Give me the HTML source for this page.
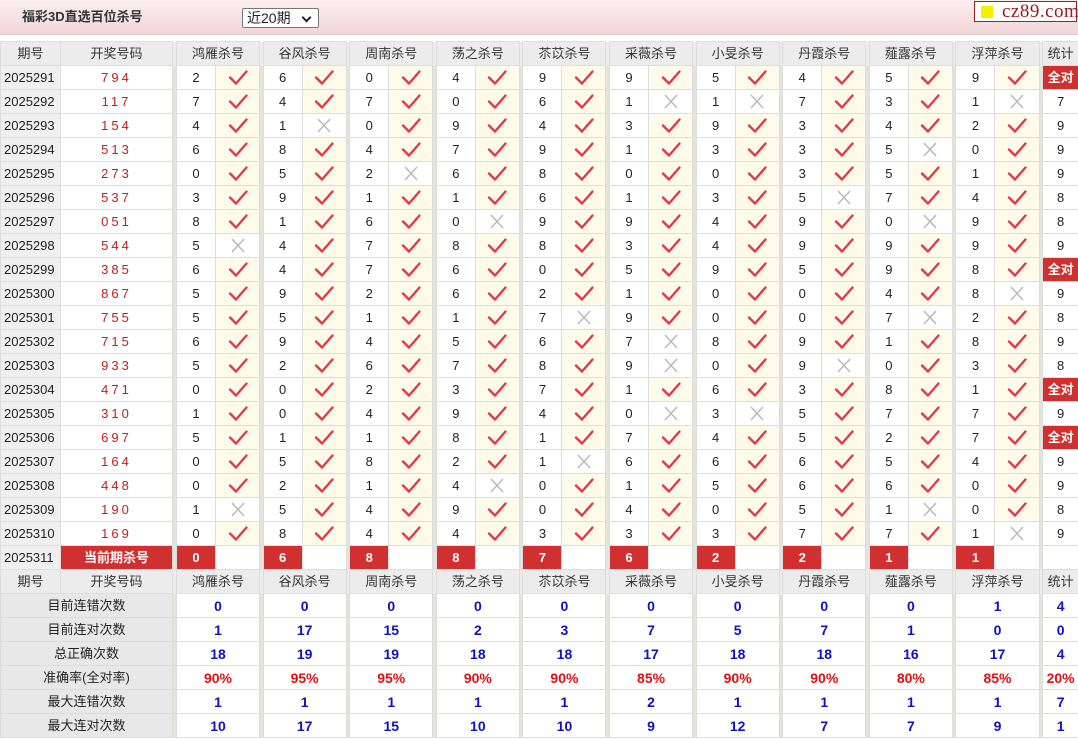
<!DOCTYPE html>
<html><head><meta charset="utf-8">
<style>
*{margin:0;padding:0;box-sizing:border-box}
body{width:1078px;height:740px;background:#fff;font-family:"Liberation Sans","Noto Sans CJK SC",sans-serif;font-size:13px;color:#222;overflow:hidden;position:relative}
.top{position:absolute;left:0;top:0;width:1078px;height:35px;background:linear-gradient(#fbeff0,#f2d6d7);border-bottom:1px solid #e6c8c8}
.title{position:absolute;left:22px;top:9px;font-weight:bold;font-size:13px;color:#333;line-height:16px}
.sel{position:absolute;left:242px;top:8px;width:77px;height:20px;border:1px solid #777;border-radius:2px;background:#fff;font-size:14px;padding-left:4px;line-height:18px}
.sel:after{content:"";position:absolute;right:8px;top:5px;width:5px;height:5px;border-right:2px solid #222;border-bottom:2px solid #222;transform:rotate(45deg)}
.logo{position:absolute;left:974px;top:1px;width:103px;height:21px;border:1px solid #a02020;background:#fff;font-family:"Liberation Serif",serif;font-size:19px;color:#a01818;line-height:19px;padding-left:27px;letter-spacing:.5px}
.logo i{position:absolute;left:6px;top:4px;width:12px;height:12px;background:#f5f000}
table{position:absolute;left:0;top:41px;border-collapse:collapse;table-layout:fixed;width:1078px}
td{height:24px;line-height:16px;border:1px solid #ddd;text-align:center;padding:0;white-space:nowrap;overflow:hidden}
tr.h td{background:#ececec;color:#333;font-size:13px}
td.s{background:#e4e4dc;border-top:none;border-bottom:none}
td.p{background:#f0f0f0;text-align:left;padding-left:3px}
td.k{color:#c81a1a;letter-spacing:3px}
td.y{background:#fffbea}
td.x{background:#fff}
td svg{width:22px;height:18px;display:block;margin:0 auto}
td.r{background:#d03030;color:#fff;font-weight:bold}
td.st{background:#fff}
td.qd{background:#d03030;color:#fff;font-weight:bold}
td.lb{background:#e8e8e8}
td.b{color:#1010c0;font-weight:bold;font-size:14px}
td.pc{color:#e01010;font-weight:bold;font-size:14px}
</style></head><body>
<svg width="0" height="0" style="position:absolute"><defs>
<symbol id="c" viewBox="0 0 22 18"><path d="M3 8.5 L9 14.5 L19.5 2.5" fill="none" stroke="#e23a48" stroke-width="2.4" stroke-linecap="round" stroke-linejoin="round"/></symbol>
<symbol id="x" viewBox="0 0 22 18"><path d="M5 2 L17 15 M17 2 L5 15" fill="none" stroke="#b8b8b8" stroke-width="1.4"/></symbol>
</defs></svg>
<div class="top"><div class="title">福彩3D直选百位杀号</div><div class="sel">近20期</div><div class="logo"><i></i>cz89.com</div></div>
<table>
<colgroup><col style="width:60px"><col style="width:112px"><col style="width:4px">
<col style="width:39px"><col style="width:44px"><col style="width:3.6px">
<col style="width:39px"><col style="width:44px"><col style="width:3.6px">
<col style="width:39px"><col style="width:44px"><col style="width:3.6px">
<col style="width:39px"><col style="width:44px"><col style="width:3.6px">
<col style="width:39px"><col style="width:44px"><col style="width:3.6px">
<col style="width:39px"><col style="width:44px"><col style="width:3.6px">
<col style="width:39px"><col style="width:44px"><col style="width:3.6px">
<col style="width:39px"><col style="width:44px"><col style="width:3.6px">
<col style="width:39px"><col style="width:44px"><col style="width:3.6px">
<col style="width:39px"><col style="width:44px"><col style="width:3.6px">
<col style="width:36px"></colgroup>
<tr class="h"><td>期号</td><td>开奖号码</td><td class="s"></td><td colspan="2">鸿雁杀号</td><td class="s"></td><td colspan="2">谷风杀号</td><td class="s"></td><td colspan="2">周南杀号</td><td class="s"></td><td colspan="2">荡之杀号</td><td class="s"></td><td colspan="2">苶苡杀号</td><td class="s"></td><td colspan="2">采薇杀号</td><td class="s"></td><td colspan="2">小旻杀号</td><td class="s"></td><td colspan="2">丹霞杀号</td><td class="s"></td><td colspan="2">薤露杀号</td><td class="s"></td><td colspan="2">浮萍杀号</td><td class="s"></td><td>统计</td></tr>
<tr><td class="p">2025291</td><td class="k">794</td><td class="s"></td><td>2</td><td class="y"><svg><use href="#c"/></svg></td><td class="s"></td><td>6</td><td class="y"><svg><use href="#c"/></svg></td><td class="s"></td><td>0</td><td class="y"><svg><use href="#c"/></svg></td><td class="s"></td><td>4</td><td class="y"><svg><use href="#c"/></svg></td><td class="s"></td><td>9</td><td class="y"><svg><use href="#c"/></svg></td><td class="s"></td><td>9</td><td class="y"><svg><use href="#c"/></svg></td><td class="s"></td><td>5</td><td class="y"><svg><use href="#c"/></svg></td><td class="s"></td><td>4</td><td class="y"><svg><use href="#c"/></svg></td><td class="s"></td><td>5</td><td class="y"><svg><use href="#c"/></svg></td><td class="s"></td><td>9</td><td class="y"><svg><use href="#c"/></svg></td><td class="s"></td><td class="qd">全对</td></tr>
<tr><td class="p">2025292</td><td class="k">117</td><td class="s"></td><td>7</td><td class="y"><svg><use href="#c"/></svg></td><td class="s"></td><td>4</td><td class="y"><svg><use href="#c"/></svg></td><td class="s"></td><td>7</td><td class="y"><svg><use href="#c"/></svg></td><td class="s"></td><td>0</td><td class="y"><svg><use href="#c"/></svg></td><td class="s"></td><td>6</td><td class="y"><svg><use href="#c"/></svg></td><td class="s"></td><td>1</td><td class="x"><svg><use href="#x"/></svg></td><td class="s"></td><td>1</td><td class="x"><svg><use href="#x"/></svg></td><td class="s"></td><td>7</td><td class="y"><svg><use href="#c"/></svg></td><td class="s"></td><td>3</td><td class="y"><svg><use href="#c"/></svg></td><td class="s"></td><td>1</td><td class="x"><svg><use href="#x"/></svg></td><td class="s"></td><td>7</td></tr>
<tr><td class="p">2025293</td><td class="k">154</td><td class="s"></td><td>4</td><td class="y"><svg><use href="#c"/></svg></td><td class="s"></td><td>1</td><td class="x"><svg><use href="#x"/></svg></td><td class="s"></td><td>0</td><td class="y"><svg><use href="#c"/></svg></td><td class="s"></td><td>9</td><td class="y"><svg><use href="#c"/></svg></td><td class="s"></td><td>4</td><td class="y"><svg><use href="#c"/></svg></td><td class="s"></td><td>3</td><td class="y"><svg><use href="#c"/></svg></td><td class="s"></td><td>9</td><td class="y"><svg><use href="#c"/></svg></td><td class="s"></td><td>3</td><td class="y"><svg><use href="#c"/></svg></td><td class="s"></td><td>4</td><td class="y"><svg><use href="#c"/></svg></td><td class="s"></td><td>2</td><td class="y"><svg><use href="#c"/></svg></td><td class="s"></td><td>9</td></tr>
<tr><td class="p">2025294</td><td class="k">513</td><td class="s"></td><td>6</td><td class="y"><svg><use href="#c"/></svg></td><td class="s"></td><td>8</td><td class="y"><svg><use href="#c"/></svg></td><td class="s"></td><td>4</td><td class="y"><svg><use href="#c"/></svg></td><td class="s"></td><td>7</td><td class="y"><svg><use href="#c"/></svg></td><td class="s"></td><td>9</td><td class="y"><svg><use href="#c"/></svg></td><td class="s"></td><td>1</td><td class="y"><svg><use href="#c"/></svg></td><td class="s"></td><td>3</td><td class="y"><svg><use href="#c"/></svg></td><td class="s"></td><td>3</td><td class="y"><svg><use href="#c"/></svg></td><td class="s"></td><td>5</td><td class="x"><svg><use href="#x"/></svg></td><td class="s"></td><td>0</td><td class="y"><svg><use href="#c"/></svg></td><td class="s"></td><td>9</td></tr>
<tr><td class="p">2025295</td><td class="k">273</td><td class="s"></td><td>0</td><td class="y"><svg><use href="#c"/></svg></td><td class="s"></td><td>5</td><td class="y"><svg><use href="#c"/></svg></td><td class="s"></td><td>2</td><td class="x"><svg><use href="#x"/></svg></td><td class="s"></td><td>6</td><td class="y"><svg><use href="#c"/></svg></td><td class="s"></td><td>8</td><td class="y"><svg><use href="#c"/></svg></td><td class="s"></td><td>0</td><td class="y"><svg><use href="#c"/></svg></td><td class="s"></td><td>0</td><td class="y"><svg><use href="#c"/></svg></td><td class="s"></td><td>3</td><td class="y"><svg><use href="#c"/></svg></td><td class="s"></td><td>5</td><td class="y"><svg><use href="#c"/></svg></td><td class="s"></td><td>1</td><td class="y"><svg><use href="#c"/></svg></td><td class="s"></td><td>9</td></tr>
<tr><td class="p">2025296</td><td class="k">537</td><td class="s"></td><td>3</td><td class="y"><svg><use href="#c"/></svg></td><td class="s"></td><td>9</td><td class="y"><svg><use href="#c"/></svg></td><td class="s"></td><td>1</td><td class="y"><svg><use href="#c"/></svg></td><td class="s"></td><td>1</td><td class="y"><svg><use href="#c"/></svg></td><td class="s"></td><td>6</td><td class="y"><svg><use href="#c"/></svg></td><td class="s"></td><td>1</td><td class="y"><svg><use href="#c"/></svg></td><td class="s"></td><td>3</td><td class="y"><svg><use href="#c"/></svg></td><td class="s"></td><td>5</td><td class="x"><svg><use href="#x"/></svg></td><td class="s"></td><td>7</td><td class="y"><svg><use href="#c"/></svg></td><td class="s"></td><td>4</td><td class="y"><svg><use href="#c"/></svg></td><td class="s"></td><td>8</td></tr>
<tr><td class="p">2025297</td><td class="k">051</td><td class="s"></td><td>8</td><td class="y"><svg><use href="#c"/></svg></td><td class="s"></td><td>1</td><td class="y"><svg><use href="#c"/></svg></td><td class="s"></td><td>6</td><td class="y"><svg><use href="#c"/></svg></td><td class="s"></td><td>0</td><td class="x"><svg><use href="#x"/></svg></td><td class="s"></td><td>9</td><td class="y"><svg><use href="#c"/></svg></td><td class="s"></td><td>9</td><td class="y"><svg><use href="#c"/></svg></td><td class="s"></td><td>4</td><td class="y"><svg><use href="#c"/></svg></td><td class="s"></td><td>9</td><td class="y"><svg><use href="#c"/></svg></td><td class="s"></td><td>0</td><td class="x"><svg><use href="#x"/></svg></td><td class="s"></td><td>9</td><td class="y"><svg><use href="#c"/></svg></td><td class="s"></td><td>8</td></tr>
<tr><td class="p">2025298</td><td class="k">544</td><td class="s"></td><td>5</td><td class="x"><svg><use href="#x"/></svg></td><td class="s"></td><td>4</td><td class="y"><svg><use href="#c"/></svg></td><td class="s"></td><td>7</td><td class="y"><svg><use href="#c"/></svg></td><td class="s"></td><td>8</td><td class="y"><svg><use href="#c"/></svg></td><td class="s"></td><td>8</td><td class="y"><svg><use href="#c"/></svg></td><td class="s"></td><td>3</td><td class="y"><svg><use href="#c"/></svg></td><td class="s"></td><td>4</td><td class="y"><svg><use href="#c"/></svg></td><td class="s"></td><td>9</td><td class="y"><svg><use href="#c"/></svg></td><td class="s"></td><td>9</td><td class="y"><svg><use href="#c"/></svg></td><td class="s"></td><td>9</td><td class="y"><svg><use href="#c"/></svg></td><td class="s"></td><td>9</td></tr>
<tr><td class="p">2025299</td><td class="k">385</td><td class="s"></td><td>6</td><td class="y"><svg><use href="#c"/></svg></td><td class="s"></td><td>4</td><td class="y"><svg><use href="#c"/></svg></td><td class="s"></td><td>7</td><td class="y"><svg><use href="#c"/></svg></td><td class="s"></td><td>6</td><td class="y"><svg><use href="#c"/></svg></td><td class="s"></td><td>0</td><td class="y"><svg><use href="#c"/></svg></td><td class="s"></td><td>5</td><td class="y"><svg><use href="#c"/></svg></td><td class="s"></td><td>9</td><td class="y"><svg><use href="#c"/></svg></td><td class="s"></td><td>5</td><td class="y"><svg><use href="#c"/></svg></td><td class="s"></td><td>9</td><td class="y"><svg><use href="#c"/></svg></td><td class="s"></td><td>8</td><td class="y"><svg><use href="#c"/></svg></td><td class="s"></td><td class="qd">全对</td></tr>
<tr><td class="p">2025300</td><td class="k">867</td><td class="s"></td><td>5</td><td class="y"><svg><use href="#c"/></svg></td><td class="s"></td><td>9</td><td class="y"><svg><use href="#c"/></svg></td><td class="s"></td><td>2</td><td class="y"><svg><use href="#c"/></svg></td><td class="s"></td><td>6</td><td class="y"><svg><use href="#c"/></svg></td><td class="s"></td><td>2</td><td class="y"><svg><use href="#c"/></svg></td><td class="s"></td><td>1</td><td class="y"><svg><use href="#c"/></svg></td><td class="s"></td><td>0</td><td class="y"><svg><use href="#c"/></svg></td><td class="s"></td><td>0</td><td class="y"><svg><use href="#c"/></svg></td><td class="s"></td><td>4</td><td class="y"><svg><use href="#c"/></svg></td><td class="s"></td><td>8</td><td class="x"><svg><use href="#x"/></svg></td><td class="s"></td><td>9</td></tr>
<tr><td class="p">2025301</td><td class="k">755</td><td class="s"></td><td>5</td><td class="y"><svg><use href="#c"/></svg></td><td class="s"></td><td>5</td><td class="y"><svg><use href="#c"/></svg></td><td class="s"></td><td>1</td><td class="y"><svg><use href="#c"/></svg></td><td class="s"></td><td>1</td><td class="y"><svg><use href="#c"/></svg></td><td class="s"></td><td>7</td><td class="x"><svg><use href="#x"/></svg></td><td class="s"></td><td>9</td><td class="y"><svg><use href="#c"/></svg></td><td class="s"></td><td>0</td><td class="y"><svg><use href="#c"/></svg></td><td class="s"></td><td>0</td><td class="y"><svg><use href="#c"/></svg></td><td class="s"></td><td>7</td><td class="x"><svg><use href="#x"/></svg></td><td class="s"></td><td>2</td><td class="y"><svg><use href="#c"/></svg></td><td class="s"></td><td>8</td></tr>
<tr><td class="p">2025302</td><td class="k">715</td><td class="s"></td><td>6</td><td class="y"><svg><use href="#c"/></svg></td><td class="s"></td><td>9</td><td class="y"><svg><use href="#c"/></svg></td><td class="s"></td><td>4</td><td class="y"><svg><use href="#c"/></svg></td><td class="s"></td><td>5</td><td class="y"><svg><use href="#c"/></svg></td><td class="s"></td><td>6</td><td class="y"><svg><use href="#c"/></svg></td><td class="s"></td><td>7</td><td class="x"><svg><use href="#x"/></svg></td><td class="s"></td><td>8</td><td class="y"><svg><use href="#c"/></svg></td><td class="s"></td><td>9</td><td class="y"><svg><use href="#c"/></svg></td><td class="s"></td><td>1</td><td class="y"><svg><use href="#c"/></svg></td><td class="s"></td><td>8</td><td class="y"><svg><use href="#c"/></svg></td><td class="s"></td><td>9</td></tr>
<tr><td class="p">2025303</td><td class="k">933</td><td class="s"></td><td>5</td><td class="y"><svg><use href="#c"/></svg></td><td class="s"></td><td>2</td><td class="y"><svg><use href="#c"/></svg></td><td class="s"></td><td>6</td><td class="y"><svg><use href="#c"/></svg></td><td class="s"></td><td>7</td><td class="y"><svg><use href="#c"/></svg></td><td class="s"></td><td>8</td><td class="y"><svg><use href="#c"/></svg></td><td class="s"></td><td>9</td><td class="x"><svg><use href="#x"/></svg></td><td class="s"></td><td>0</td><td class="y"><svg><use href="#c"/></svg></td><td class="s"></td><td>9</td><td class="x"><svg><use href="#x"/></svg></td><td class="s"></td><td>0</td><td class="y"><svg><use href="#c"/></svg></td><td class="s"></td><td>3</td><td class="y"><svg><use href="#c"/></svg></td><td class="s"></td><td>8</td></tr>
<tr><td class="p">2025304</td><td class="k">471</td><td class="s"></td><td>0</td><td class="y"><svg><use href="#c"/></svg></td><td class="s"></td><td>0</td><td class="y"><svg><use href="#c"/></svg></td><td class="s"></td><td>2</td><td class="y"><svg><use href="#c"/></svg></td><td class="s"></td><td>3</td><td class="y"><svg><use href="#c"/></svg></td><td class="s"></td><td>7</td><td class="y"><svg><use href="#c"/></svg></td><td class="s"></td><td>1</td><td class="y"><svg><use href="#c"/></svg></td><td class="s"></td><td>6</td><td class="y"><svg><use href="#c"/></svg></td><td class="s"></td><td>3</td><td class="y"><svg><use href="#c"/></svg></td><td class="s"></td><td>8</td><td class="y"><svg><use href="#c"/></svg></td><td class="s"></td><td>1</td><td class="y"><svg><use href="#c"/></svg></td><td class="s"></td><td class="qd">全对</td></tr>
<tr><td class="p">2025305</td><td class="k">310</td><td class="s"></td><td>1</td><td class="y"><svg><use href="#c"/></svg></td><td class="s"></td><td>0</td><td class="y"><svg><use href="#c"/></svg></td><td class="s"></td><td>4</td><td class="y"><svg><use href="#c"/></svg></td><td class="s"></td><td>9</td><td class="y"><svg><use href="#c"/></svg></td><td class="s"></td><td>4</td><td class="y"><svg><use href="#c"/></svg></td><td class="s"></td><td>0</td><td class="x"><svg><use href="#x"/></svg></td><td class="s"></td><td>3</td><td class="x"><svg><use href="#x"/></svg></td><td class="s"></td><td>5</td><td class="y"><svg><use href="#c"/></svg></td><td class="s"></td><td>7</td><td class="y"><svg><use href="#c"/></svg></td><td class="s"></td><td>7</td><td class="y"><svg><use href="#c"/></svg></td><td class="s"></td><td>9</td></tr>
<tr><td class="p">2025306</td><td class="k">697</td><td class="s"></td><td>5</td><td class="y"><svg><use href="#c"/></svg></td><td class="s"></td><td>1</td><td class="y"><svg><use href="#c"/></svg></td><td class="s"></td><td>1</td><td class="y"><svg><use href="#c"/></svg></td><td class="s"></td><td>8</td><td class="y"><svg><use href="#c"/></svg></td><td class="s"></td><td>1</td><td class="y"><svg><use href="#c"/></svg></td><td class="s"></td><td>7</td><td class="y"><svg><use href="#c"/></svg></td><td class="s"></td><td>4</td><td class="y"><svg><use href="#c"/></svg></td><td class="s"></td><td>5</td><td class="y"><svg><use href="#c"/></svg></td><td class="s"></td><td>2</td><td class="y"><svg><use href="#c"/></svg></td><td class="s"></td><td>7</td><td class="y"><svg><use href="#c"/></svg></td><td class="s"></td><td class="qd">全对</td></tr>
<tr><td class="p">2025307</td><td class="k">164</td><td class="s"></td><td>0</td><td class="y"><svg><use href="#c"/></svg></td><td class="s"></td><td>5</td><td class="y"><svg><use href="#c"/></svg></td><td class="s"></td><td>8</td><td class="y"><svg><use href="#c"/></svg></td><td class="s"></td><td>2</td><td class="y"><svg><use href="#c"/></svg></td><td class="s"></td><td>1</td><td class="x"><svg><use href="#x"/></svg></td><td class="s"></td><td>6</td><td class="y"><svg><use href="#c"/></svg></td><td class="s"></td><td>6</td><td class="y"><svg><use href="#c"/></svg></td><td class="s"></td><td>6</td><td class="y"><svg><use href="#c"/></svg></td><td class="s"></td><td>5</td><td class="y"><svg><use href="#c"/></svg></td><td class="s"></td><td>4</td><td class="y"><svg><use href="#c"/></svg></td><td class="s"></td><td>9</td></tr>
<tr><td class="p">2025308</td><td class="k">448</td><td class="s"></td><td>0</td><td class="y"><svg><use href="#c"/></svg></td><td class="s"></td><td>2</td><td class="y"><svg><use href="#c"/></svg></td><td class="s"></td><td>1</td><td class="y"><svg><use href="#c"/></svg></td><td class="s"></td><td>4</td><td class="x"><svg><use href="#x"/></svg></td><td class="s"></td><td>0</td><td class="y"><svg><use href="#c"/></svg></td><td class="s"></td><td>1</td><td class="y"><svg><use href="#c"/></svg></td><td class="s"></td><td>5</td><td class="y"><svg><use href="#c"/></svg></td><td class="s"></td><td>6</td><td class="y"><svg><use href="#c"/></svg></td><td class="s"></td><td>6</td><td class="y"><svg><use href="#c"/></svg></td><td class="s"></td><td>0</td><td class="y"><svg><use href="#c"/></svg></td><td class="s"></td><td>9</td></tr>
<tr><td class="p">2025309</td><td class="k">190</td><td class="s"></td><td>1</td><td class="x"><svg><use href="#x"/></svg></td><td class="s"></td><td>5</td><td class="y"><svg><use href="#c"/></svg></td><td class="s"></td><td>4</td><td class="y"><svg><use href="#c"/></svg></td><td class="s"></td><td>9</td><td class="y"><svg><use href="#c"/></svg></td><td class="s"></td><td>0</td><td class="y"><svg><use href="#c"/></svg></td><td class="s"></td><td>4</td><td class="y"><svg><use href="#c"/></svg></td><td class="s"></td><td>0</td><td class="y"><svg><use href="#c"/></svg></td><td class="s"></td><td>5</td><td class="y"><svg><use href="#c"/></svg></td><td class="s"></td><td>1</td><td class="x"><svg><use href="#x"/></svg></td><td class="s"></td><td>0</td><td class="y"><svg><use href="#c"/></svg></td><td class="s"></td><td>8</td></tr>
<tr><td class="p">2025310</td><td class="k">169</td><td class="s"></td><td>0</td><td class="y"><svg><use href="#c"/></svg></td><td class="s"></td><td>8</td><td class="y"><svg><use href="#c"/></svg></td><td class="s"></td><td>4</td><td class="y"><svg><use href="#c"/></svg></td><td class="s"></td><td>4</td><td class="y"><svg><use href="#c"/></svg></td><td class="s"></td><td>3</td><td class="y"><svg><use href="#c"/></svg></td><td class="s"></td><td>3</td><td class="y"><svg><use href="#c"/></svg></td><td class="s"></td><td>3</td><td class="y"><svg><use href="#c"/></svg></td><td class="s"></td><td>7</td><td class="y"><svg><use href="#c"/></svg></td><td class="s"></td><td>7</td><td class="y"><svg><use href="#c"/></svg></td><td class="s"></td><td>1</td><td class="x"><svg><use href="#x"/></svg></td><td class="s"></td><td>9</td></tr>
<tr><td class="p">2025311</td><td class="r">当前期杀号</td><td class="s"></td><td class="r">0</td><td class="st"></td><td class="s"></td><td class="r">6</td><td class="st"></td><td class="s"></td><td class="r">8</td><td class="st"></td><td class="s"></td><td class="r">8</td><td class="st"></td><td class="s"></td><td class="r">7</td><td class="st"></td><td class="s"></td><td class="r">6</td><td class="st"></td><td class="s"></td><td class="r">2</td><td class="st"></td><td class="s"></td><td class="r">2</td><td class="st"></td><td class="s"></td><td class="r">1</td><td class="st"></td><td class="s"></td><td class="r">1</td><td class="st"></td><td class="s"></td><td class="st"></td></tr>
<tr class="h"><td>期号</td><td>开奖号码</td><td class="s"></td><td colspan="2">鸿雁杀号</td><td class="s"></td><td colspan="2">谷风杀号</td><td class="s"></td><td colspan="2">周南杀号</td><td class="s"></td><td colspan="2">荡之杀号</td><td class="s"></td><td colspan="2">苶苡杀号</td><td class="s"></td><td colspan="2">采薇杀号</td><td class="s"></td><td colspan="2">小旻杀号</td><td class="s"></td><td colspan="2">丹霞杀号</td><td class="s"></td><td colspan="2">薤露杀号</td><td class="s"></td><td colspan="2">浮萍杀号</td><td class="s"></td><td>统计</td></tr>
<tr><td class="lb" colspan="2">目前连错次数</td><td class="s"></td><td class="b" colspan="2">0</td><td class="s"></td><td class="b" colspan="2">0</td><td class="s"></td><td class="b" colspan="2">0</td><td class="s"></td><td class="b" colspan="2">0</td><td class="s"></td><td class="b" colspan="2">0</td><td class="s"></td><td class="b" colspan="2">0</td><td class="s"></td><td class="b" colspan="2">0</td><td class="s"></td><td class="b" colspan="2">0</td><td class="s"></td><td class="b" colspan="2">0</td><td class="s"></td><td class="b" colspan="2">1</td><td class="s"></td><td class="b">4</td></tr>
<tr><td class="lb" colspan="2">目前连对次数</td><td class="s"></td><td class="b" colspan="2">1</td><td class="s"></td><td class="b" colspan="2">17</td><td class="s"></td><td class="b" colspan="2">15</td><td class="s"></td><td class="b" colspan="2">2</td><td class="s"></td><td class="b" colspan="2">3</td><td class="s"></td><td class="b" colspan="2">7</td><td class="s"></td><td class="b" colspan="2">5</td><td class="s"></td><td class="b" colspan="2">7</td><td class="s"></td><td class="b" colspan="2">1</td><td class="s"></td><td class="b" colspan="2">0</td><td class="s"></td><td class="b">0</td></tr>
<tr><td class="lb" colspan="2">总正确次数</td><td class="s"></td><td class="b" colspan="2">18</td><td class="s"></td><td class="b" colspan="2">19</td><td class="s"></td><td class="b" colspan="2">19</td><td class="s"></td><td class="b" colspan="2">18</td><td class="s"></td><td class="b" colspan="2">18</td><td class="s"></td><td class="b" colspan="2">17</td><td class="s"></td><td class="b" colspan="2">18</td><td class="s"></td><td class="b" colspan="2">18</td><td class="s"></td><td class="b" colspan="2">16</td><td class="s"></td><td class="b" colspan="2">17</td><td class="s"></td><td class="b">4</td></tr>
<tr><td class="lb" colspan="2">准确率(全对率)</td><td class="s"></td><td class="pc" colspan="2">90%</td><td class="s"></td><td class="pc" colspan="2">95%</td><td class="s"></td><td class="pc" colspan="2">95%</td><td class="s"></td><td class="pc" colspan="2">90%</td><td class="s"></td><td class="pc" colspan="2">90%</td><td class="s"></td><td class="pc" colspan="2">85%</td><td class="s"></td><td class="pc" colspan="2">90%</td><td class="s"></td><td class="pc" colspan="2">90%</td><td class="s"></td><td class="pc" colspan="2">80%</td><td class="s"></td><td class="pc" colspan="2">85%</td><td class="s"></td><td class="pc">20%</td></tr>
<tr><td class="lb" colspan="2">最大连错次数</td><td class="s"></td><td class="b" colspan="2">1</td><td class="s"></td><td class="b" colspan="2">1</td><td class="s"></td><td class="b" colspan="2">1</td><td class="s"></td><td class="b" colspan="2">1</td><td class="s"></td><td class="b" colspan="2">1</td><td class="s"></td><td class="b" colspan="2">2</td><td class="s"></td><td class="b" colspan="2">1</td><td class="s"></td><td class="b" colspan="2">1</td><td class="s"></td><td class="b" colspan="2">1</td><td class="s"></td><td class="b" colspan="2">1</td><td class="s"></td><td class="b">7</td></tr>
<tr><td class="lb" colspan="2">最大连对次数</td><td class="s"></td><td class="b" colspan="2">10</td><td class="s"></td><td class="b" colspan="2">17</td><td class="s"></td><td class="b" colspan="2">15</td><td class="s"></td><td class="b" colspan="2">10</td><td class="s"></td><td class="b" colspan="2">10</td><td class="s"></td><td class="b" colspan="2">9</td><td class="s"></td><td class="b" colspan="2">12</td><td class="s"></td><td class="b" colspan="2">7</td><td class="s"></td><td class="b" colspan="2">7</td><td class="s"></td><td class="b" colspan="2">9</td><td class="s"></td><td class="b">1</td></tr>
</table>
</body></html>
